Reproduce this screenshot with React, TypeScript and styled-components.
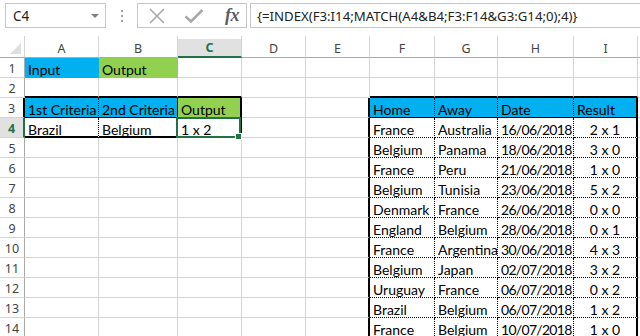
import React from 'react';
import styled, { createGlobalStyle } from 'styled-components';

const GREEN = '#217346';
const GRID = '#d4d4d4';
const BLUE = '#00b0f0';
const LIME = '#92d050';
const THICK = '2px solid #000';
const THIN = '1px solid #000';
const DOT = '1px dotted #000';

const Global = createGlobalStyle`
  html, body { margin: 0; padding: 0; background: #fff; overflow: hidden; }
  body { width: 640px; height: 336px; }
`;

const Page = styled.div`
  width: 640px;
  height: 336px;
  overflow: hidden;
  background: #fff;
  display: flex;
  flex-direction: column;
`;

const FormulaBar = styled.div`
  flex: 0 0 36px;
  display: flex;
  align-items: flex-start;
  padding: 3px 0 0 5px;
  box-sizing: border-box;
`;

const NameBox = styled.div`
  width: 101px;
  height: 25px;
  box-sizing: border-box;
  border: 1px solid #c6c6c6;
  display: flex;
  align-items: center;
  justify-content: space-between;
  padding: 0 6px 0 7px;
  font-family: 'Noto Sans', sans-serif;
  font-size: 13.5px;
  color: #222;
`;

const Caret = styled.span`
  width: 0;
  height: 0;
  border-left: 4px solid transparent;
  border-right: 4px solid transparent;
  border-top: 4px solid #808080;
`;

const Grip = styled.div`
  width: 31px;
  height: 25px;
  display: flex;
  flex-direction: column;
  align-items: center;
  justify-content: center;
  gap: 3px;
  & > i {
    display: block;
    width: 2px;
    height: 2px;
    background: #a0a0a0;
  }
`;

const IconBox = styled.div`
  width: 110px;
  height: 25px;
  box-sizing: border-box;
  border: 1px solid #c6c6c6;
  display: flex;
  align-items: center;
  padding: 0 0 0 8px;
`;

const IconSlot = styled.div<{ $w: number }>`
  width: ${(p) => p.$w}px;
  height: 23px;
  display: flex;
  align-items: center;
  justify-content: center;
`;

const Fx = styled.span`
  font-family: 'Liberation Serif', serif;
  font-style: italic;
  font-weight: bold;
  font-size: 18px;
  color: #5c5c5c;
  letter-spacing: -0.5px;
`;

const FormulaInput = styled.div`
  flex: 1;
  height: 25px;
  margin-left: 3px;
  box-sizing: border-box;
  border: 1px solid #c6c6c6;
  border-right: none;
  display: flex;
  align-items: center;
  padding-left: 6px;
  font-family: 'Noto Sans', sans-serif;
  font-size: 13.2px;
  color: #222;
  white-space: nowrap;
`;

const Sheet = styled.div`
  display: grid;
  grid-template-columns: 25px 74px 79px 64px 64px 64px 65px 63px 76px 64px 1fr;
  grid-template-rows: 22px;
  grid-auto-rows: 20px;
  width: 640px;
`;

const Corner = styled.div`
  position: relative;
  box-sizing: border-box;
  border-right: 1px solid ${GRID};
  border-bottom: 1px solid #ababab;
  &::after {
    content: '';
    position: absolute;
    right: 3px;
    bottom: 3px;
    width: 0;
    height: 0;
    border-left: 11px solid transparent;
    border-bottom: 11px solid #dfdfdf;
  }
`;

const ColHead = styled.div<{ $sel?: boolean }>`
  box-sizing: border-box;
  border-right: 1px solid ${GRID};
  border-bottom: ${(p) => (p.$sel ? `2px solid ${GREEN}` : '1px solid #ababab')};
  background: ${(p) => (p.$sel ? 'linear-gradient(#fff 0 3px, #e1e1e1 3px)' : '#fff')};
  display: flex;
  align-items: center;
  justify-content: center;
  padding-top: 3px;
  font-family: 'Noto Sans', sans-serif;
  font-size: 12.5px;
  font-weight: ${(p) => (p.$sel ? 700 : 400)};
  color: ${(p) => (p.$sel ? GREEN : '#444')};
`;

const RowHead = styled.div<{ $sel?: boolean; $edge?: string }>`
  box-sizing: border-box;
  border-bottom: 1px solid ${GRID};
  border-right: ${(p) => p.$edge || '1px solid #ababab'};
  background: ${(p) => (p.$sel ? '#e1e1e1' : '#fff')};
  display: flex;
  align-items: center;
  justify-content: center;
  padding-top: 1px;
  font-family: 'Noto Sans', sans-serif;
  font-size: 12.5px;
  font-weight: ${(p) => (p.$sel ? 700 : 400)};
  color: ${(p) => (p.$sel ? GREEN : '#444')};
`;

type Align = 'left' | 'right' | 'center';

const Cell = styled.div<{
  $fill?: string;
  $align?: Align;
  $r?: string;
  $b?: string;
  $sel?: boolean;
  $num?: boolean;
}>`
  position: relative;
  z-index: ${(p) => (p.$sel ? 2 : 'auto')};
  box-sizing: border-box;
  background: ${(p) => p.$fill || '#fff'};
  border-right: ${(p) => p.$r || `1px solid ${p.$fill || GRID}`};
  border-bottom: ${(p) => p.$b || `1px solid ${p.$fill || GRID}`};
  padding: 3px 3px 0 3px;
  font-family: Lato, 'Liberation Sans', sans-serif;
  font-size: 14px;
  line-height: 17px;
  letter-spacing: ${(p) => (p.$num ? '-0.7px' : '0')};
  color: #000;
  text-align: ${(p) => p.$align || 'left'};
  white-space: nowrap;
  overflow: ${(p) => (p.$sel ? 'visible' : 'hidden')};
`;

const Selection = styled.div`
  position: absolute;
  left: -2px;
  top: -1px;
  right: -1px;
  bottom: -2px;
  border: 2px solid ${GREEN};
  pointer-events: none;
`;

const Handle = styled.div`
  position: absolute;
  right: -3px;
  bottom: -4px;
  width: 5px;
  height: 5px;
  background: ${GREEN};
  border: 1px solid #fff;
`;

type Spec = { t?: string; fill?: string; align?: Align; r?: string; b?: string; sel?: boolean; num?: boolean };

const matches: [string, string, string, string][] = [
  ['France', 'Australia', '16/06/2018', '2 x 1'],
  ['Belgium', 'Panama', '18/06/2018', '3 x 0'],
  ['France', 'Peru', '21/06/2018', '1 x 0'],
  ['Belgium', 'Tunisia', '23/06/2018', '5 x 2'],
  ['Denmark', 'France', '26/06/2018', '0 x 0'],
  ['England', 'Belgium', '28/06/2018', '0 x 1'],
  ['France', 'Argentina', '30/06/2018', '4 x 3'],
  ['Belgium', 'Japan', '02/07/2018', '3 x 2'],
  ['Uruguay', 'France', '06/07/2018', '0 x 2'],
  ['Brazil', 'Belgium', '06/07/2018', '1 x 2'],
  ['France', 'Belgium', '10/07/2018', '1 x 0'],
];

const COLS = ['A', 'B', 'C', 'D', 'E', 'F', 'G', 'H', 'I', ''];

function buildRow(row: number): Spec[] {
  const cells: Spec[] = COLS.map(() => ({}));
  if (row === 1) {
    cells[0] = { t: 'Input', fill: BLUE };
    cells[1] = { t: 'Output', fill: LIME };
  }
  if (row === 2) {
    [0, 1, 2, 5, 6, 7, 8].forEach((i) => (cells[i] = { b: THICK }));
  }
  if (row === 3) {
    cells[0] = { t: '1st Criteria', fill: BLUE, r: DOT, b: THIN };
    cells[1] = { t: '2nd Criteria', fill: BLUE, r: THIN, b: THIN };
    cells[2] = { t: 'Output', fill: LIME, r: THICK, b: THIN };
  }
  if (row === 4) {
    cells[0] = { t: 'Brazil', r: DOT, b: THICK };
    cells[1] = { t: 'Belgium', r: THIN, b: THICK };
    cells[2] = { t: '1 x 2', r: THICK, b: THICK, sel: true };
  }
  if (row >= 3) {
    cells[4] = { ...cells[4], r: THICK };
    if (row === 3) {
      cells[5] = { t: 'Home', fill: BLUE, r: DOT, b: THIN };
      cells[6] = { t: 'Away', fill: BLUE, r: DOT, b: THIN };
      cells[7] = { t: 'Date', fill: BLUE, r: DOT, b: THIN };
      cells[8] = { t: 'Result', fill: BLUE, r: THICK, b: THIN };
    } else {
      const m = matches[row - 4];
      if (m) {
        cells[5] = { t: m[0], r: DOT, b: DOT };
        cells[6] = { t: m[1], r: DOT, b: DOT };
        cells[7] = { t: m[2], r: DOT, b: DOT, align: 'right', num: true };
        cells[8] = { t: m[3], r: THICK, b: DOT, align: 'center' };
      }
    }
  }
  return cells;
}

const CloseIcon = () => (
  <svg width="18" height="18" viewBox="0 0 18 18">
    <path d="M2 2 L16 16 M16 2 L2 16" stroke="#a8a8a8" strokeWidth="1.6" fill="none" />
  </svg>
);

const CheckIcon = () => (
  <svg width="20" height="16" viewBox="0 0 20 16">
    <path d="M1.5 8.5 L7 13.5 L18.5 2" stroke="#a8a8a8" strokeWidth="2.6" fill="none" />
  </svg>
);

export default function App() {
  const rows = Array.from({ length: 14 }, (_, i) => i + 1);
  return (
    <Page>
      <Global />
      <FormulaBar>
        <NameBox>
          <span>C4</span>
          <Caret />
        </NameBox>
        <Grip>
          <i />
          <i />
          <i />
        </Grip>
        <IconBox>
          <IconSlot $w={22}>
            <CloseIcon />
          </IconSlot>
          <IconSlot $w={14} />
          <IconSlot $w={24}>
            <CheckIcon />
          </IconSlot>
          <IconSlot $w={14} />
          <IconSlot $w={24}>
            <Fx>fx</Fx>
          </IconSlot>
        </IconBox>
        <FormulaInput>{'{=INDEX(F3:I14;MATCH(A4&B4;F3:F14&G3:G14;0);4)}'}</FormulaInput>
      </FormulaBar>
      <Sheet>
        <Corner />
        {COLS.map((c, i) => (
          <ColHead key={'h' + i} $sel={c === 'C'}>
            {c}
          </ColHead>
        ))}
        {rows.map((r) => (
          <React.Fragment key={r}>
            <RowHead
              $sel={r === 4}
              $edge={r === 4 ? `2px solid ${GREEN}` : r === 3 ? THICK : undefined}
            >
              {r}
            </RowHead>
            {buildRow(r).map((s, i) => (
              <Cell
                key={i}
                $fill={s.fill}
                $align={s.align}
                $r={s.r}
                $b={s.b}
                $sel={s.sel}
                $num={s.num}
              >
                {s.t}
                {s.sel && (
                  <Selection>
                    <Handle />
                  </Selection>
                )}
              </Cell>
            ))}
          </React.Fragment>
        ))}
      </Sheet>
    </Page>
  );
}
